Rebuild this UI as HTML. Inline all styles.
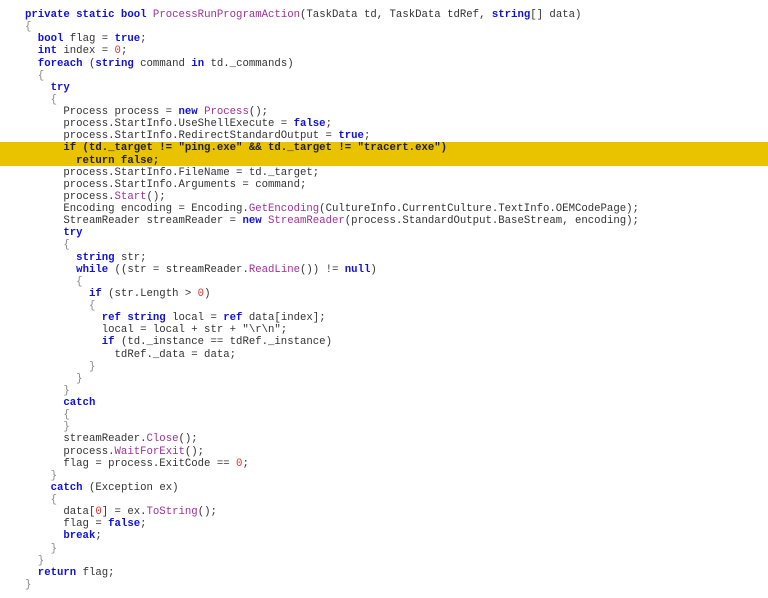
<!DOCTYPE html>
<html><head><style>
html,body{margin:0;padding:0;background:#fff;width:768px;height:598px;overflow:hidden}
pre{position:absolute;left:25px;top:9px;margin:0;font-family:"Liberation Mono",monospace;font-size:10.67px;line-height:12.13px;color:#333}
.k{color:#1010e0;font-weight:bold}
.m{color:#a0309a}
.n{color:#e03030}
.p{color:#888}
.hl{position:absolute;left:0;top:141.5px;width:768px;height:24.5px;background:#e9c200}
.b{color:#222;font-weight:bold}
</style></head><body>
<div class="hl"></div>
<pre><span class="k">private static bool</span> <span class="m">ProcessRunProgramAction</span>(TaskData td, TaskData tdRef, <span class="k">string</span>[] data)
<span class="p">{</span>
  <span class="k">bool</span> flag = <span class="k">true</span>;
  <span class="k">int</span> index = <span class="n">0</span>;
  <span class="k">foreach</span> (<span class="k">string</span> command <span class="k">in</span> td._commands)
  <span class="p">{</span>
    <span class="k">try</span>
    <span class="p">{</span>
      Process process = <span class="k">new</span> <span class="m">Process</span>();
      process.StartInfo.UseShellExecute = <span class="k">false</span>;
      process.StartInfo.RedirectStandardOutput = <span class="k">true</span>;
<span class="b">      if (td._target != "ping.exe" &amp;&amp; td._target != "tracert.exe")
        return false;</span>
      process.StartInfo.FileName = td._target;
      process.StartInfo.Arguments = command;
      process.<span class="m">Start</span>();
      Encoding encoding = Encoding.<span class="m">GetEncoding</span>(CultureInfo.CurrentCulture.TextInfo.OEMCodePage);
      StreamReader streamReader = <span class="k">new</span> <span class="m">StreamReader</span>(process.StandardOutput.BaseStream, encoding);
      <span class="k">try</span>
      <span class="p">{</span>
        <span class="k">string</span> str;
        <span class="k">while</span> ((str = streamReader.<span class="m">ReadLine</span>()) != <span class="k">null</span>)
        <span class="p">{</span>
          <span class="k">if</span> (str.Length &gt; <span class="n">0</span>)
          <span class="p">{</span>
            <span class="k">ref string</span> local = <span class="k">ref</span> data[index];
            local = local + str + "\r\n";
            <span class="k">if</span> (td._instance == tdRef._instance)
              tdRef._data = data;
          <span class="p">}</span>
        <span class="p">}</span>
      <span class="p">}</span>
      <span class="k">catch</span>
      <span class="p">{</span>
      <span class="p">}</span>
      streamReader.<span class="m">Close</span>();
      process.<span class="m">WaitForExit</span>();
      flag = process.ExitCode == <span class="n">0</span>;
    <span class="p">}</span>
    <span class="k">catch</span> (Exception ex)
    <span class="p">{</span>
      data[<span class="n">0</span>] = ex.<span class="m">ToString</span>();
      flag = <span class="k">false</span>;
      <span class="k">break</span>;
    <span class="p">}</span>
  <span class="p">}</span>
  <span class="k">return</span> flag;
<span class="p">}</span></pre>
</body></html>
